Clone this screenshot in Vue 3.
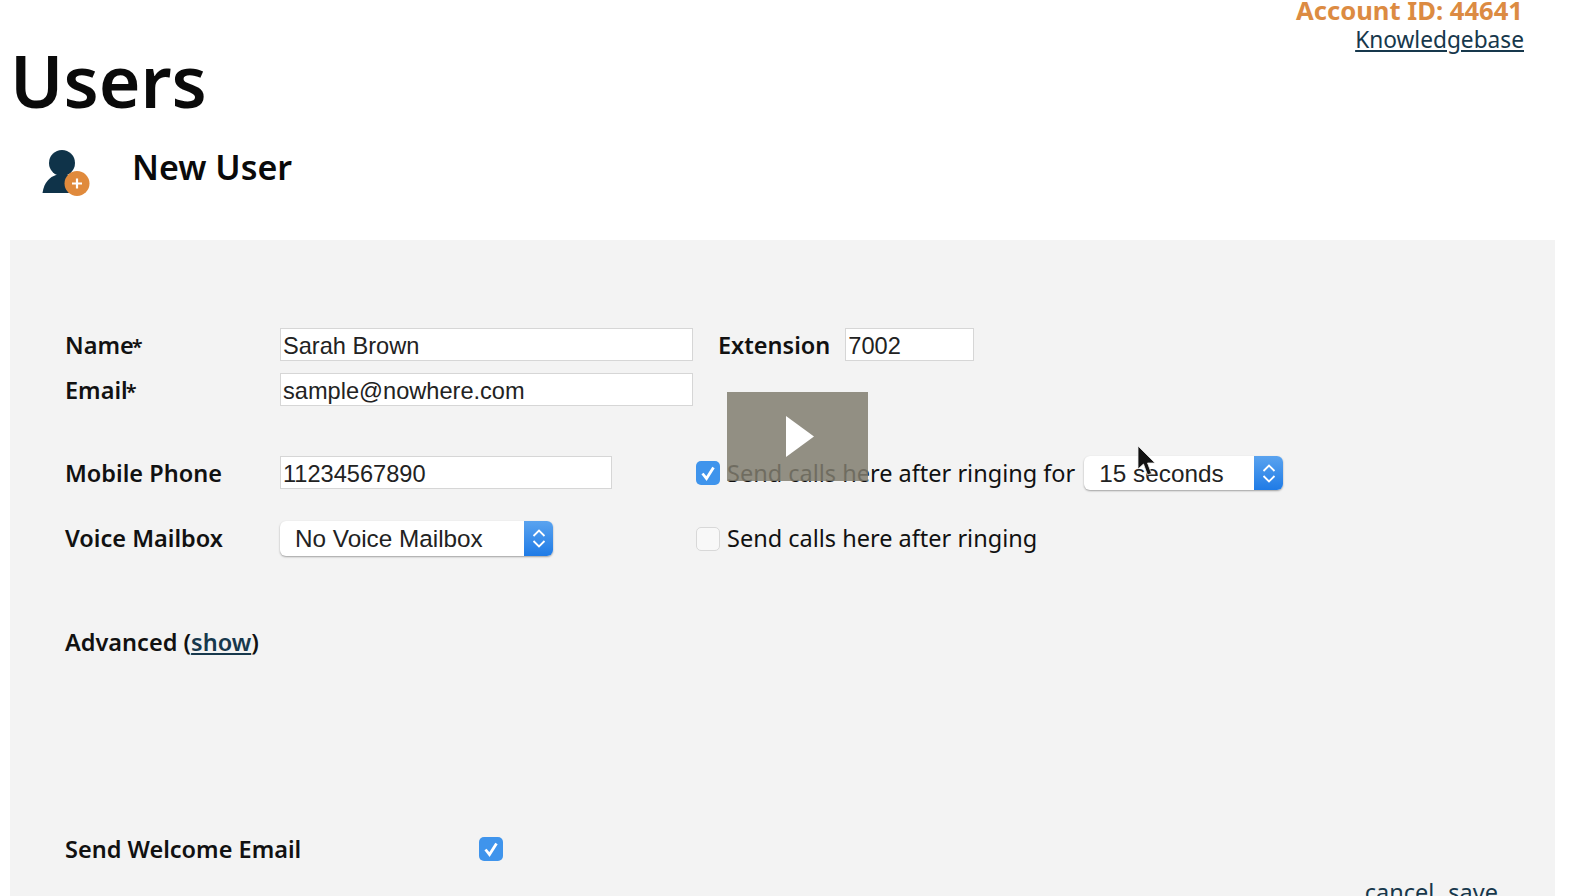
<script setup>
const chevrons = 'M2.5 8 L8 2.5 L13.5 8 M2.5 13 L8 18.5 L13.5 13'
</script>

<template>
  <div class="page">
    <header class="top">
      <div class="account">Account ID: 44641</div>
      <a class="kb">Knowledgebase</a>
      <h1 class="title">Users</h1>
      <div class="subhead">
        <svg class="user-icon" viewBox="0 0 48 48" width="48" height="48">
          <circle cx="20" cy="14" r="13" fill="#0f3349" />
          <path d="M0.5 44 C2 33 8 28 14 26 L27 26 C32 28 36 33 38 44 Z" fill="#0f3349" />
          <circle cx="35" cy="34.5" r="12.5" fill="#e08a3c" />
          <path d="M35 29.5 V39.5 M30 34.5 H40" stroke="#fff" stroke-width="2.2" />
        </svg>
        <h2 class="subtitle">New User</h2>
      </div>
    </header>

    <main class="panel">
      <div class="row name-row">
        <label class="lbl">Name<span class="star">*</span></label>
        <div class="field wide">Sarah Brown</div>
        <label class="lbl ext-lbl">Extension</label>
        <div class="field ext">7002</div>
      </div>
      <div class="row email-row">
        <label class="lbl">Email<span class="star">*</span></label>
        <div class="field wide">sample@nowhere.com</div>
      </div>
      <div class="row mobile-row">
        <label class="lbl">Mobile Phone</label>
        <div class="field mobile">11234567890</div>
        <span class="check on">
          <svg viewBox="0 0 24 24" width="24" height="24"><path d="M6.5 12.5 L10.5 17.5 L17.5 6.5" fill="none" stroke="#fff" stroke-width="2.8" /></svg>
        </span>
        <span class="opt">Send calls here after ringing for</span>
        <div class="select seconds">
          <span class="sel-text">15 seconds</span>
          <span class="sel-btn">
            <svg viewBox="0 0 16 21" width="16" height="21"><path :d="chevrons" fill="none" stroke="#fff" stroke-width="1.8" /></svg>
          </span>
        </div>
      </div>
      <div class="row voice-row">
        <label class="lbl">Voice Mailbox</label>
        <div class="select mailbox">
          <span class="sel-text">No Voice Mailbox</span>
          <span class="sel-btn">
            <svg viewBox="0 0 16 21" width="16" height="21"><path :d="chevrons" fill="none" stroke="#fff" stroke-width="1.8" /></svg>
          </span>
        </div>
        <span class="check off"></span>
        <span class="opt">Send calls here after ringing</span>
      </div>
      <div class="row advanced-row">
        <span class="lbl">Advanced (<a class="show">show</a>)</span>
      </div>
      <div class="row welcome-row">
        <label class="lbl welcome-lbl">Send Welcome Email</label>
        <span class="check on">
          <svg viewBox="0 0 24 24" width="24" height="24"><path d="M6.5 12.5 L10.5 17.5 L17.5 6.5" fill="none" stroke="#fff" stroke-width="2.8" /></svg>
        </span>
      </div>
      <div class="actions"><a>cancel</a><a>save</a></div>
    </main>

    <div class="play">
      <svg viewBox="0 0 28 41" width="28" height="41"><path d="M0 0 L28 20.5 L0 41 Z" fill="#fff" /></svg>
    </div>
    <svg class="cursor" viewBox="0 0 20 32" width="20" height="32">
      <path d="M1 1 L1 24 L6.5 19 L10.5 30 L14.5 28.5 L10.5 18 L18 18 Z" fill="#111" stroke="#eee" stroke-width="0.8" />
    </svg>
  </div>
</template>

<style scoped>
.page {
  position: relative;
  width: 1595px;
  height: 896px;
  overflow: hidden;
  background: #fff;
  font-family: "Noto Sans", "DejaVu Sans", sans-serif;
  color: #111;
}
.top {
  height: 240px;
  box-sizing: border-box;
  display: flex;
  flex-direction: column;
}
.account {
  align-self: flex-end;
  margin-right: 72px;
  height: 22px;
  line-height: 22px;
  font-size: 25.6px;
  font-weight: 700;
  color: #dc8b42;
}
.kb {
  align-self: flex-end;
  margin-right: 71px;
  height: 30px;
  margin-top: 3px;
  line-height: 30px;
  font-size: 22.7px;
  color: #17384c;
  text-decoration: underline;
}
.title {
  margin: -13px 0 0 10px;
  height: 78px;
  line-height: 78px;
  font-size: 71.5px;
  font-weight: 600;
  color: #0a0a0a;
}
.subhead {
  display: flex;
  align-items: center;
  margin: 29px 0 0 42px;
  height: 48px;
}
.user-icon { flex: none; }
.subtitle {
  margin: -12px 0 0 42px;
  font-size: 34px;
  font-weight: 600;
  line-height: 40px;
  color: #0a0a0a;
}
.panel {
  margin-left: 10px;
  width: 1545px;
  height: 656px;
  box-sizing: border-box;
  padding: 88px 0 0 55px;
  background: #f3f3f3;
  position: relative;
}
.row {
  display: flex;
  align-items: center;
  height: 33px;
}
.email-row { margin-top: 12px; }
.mobile-row { margin-top: 50px; }
.voice-row { margin-top: 32px; height: 35px; }
.voice-row .lbl,
.voice-row .opt { margin-bottom: 2px; }
.advanced-row { margin-top: 69px; }
.welcome-row { margin-top: 174px; }
.lbl {
  width: 215px;
  flex: none;
  font-size: 23.5px;
  font-weight: 600;
  white-space: nowrap;
}
.star { font-size: 20px; margin-left: -2px; }
.ext-lbl {
  width: auto;
  margin-left: 25px;
  margin-right: 15px;
}
.welcome-lbl { width: 414px; }
.field {
  box-sizing: border-box;
  height: 33px;
  line-height: 33px;
  padding: 1px 0 0 2px;
  border: 1px solid #d6d6d6;
  background: #fff;
  font-family: "Liberation Sans", Arial, sans-serif;
  font-size: 23.6px;
  color: #222;
  flex: none;
}
.wide { width: 413px; }
.ext { width: 129px; }
.mobile { width: 332px; margin-right: 84px; }
.check {
  box-sizing: border-box;
  flex: none;
  width: 24px;
  height: 24px;
  border-radius: 5px;
  display: block;
}
.check svg { display: block; }
.on { background: #3f94ec; }
.off {
  background: #f8f8f8;
  border: 1px solid #d8d8d8;
  margin-left: 143px;
}
.opt {
  margin-left: 7px;
  font-size: 23.5px;
  color: #111;
  white-space: nowrap;
}
.select {
  box-sizing: border-box;
  display: flex;
  align-items: stretch;
  background: #fff;
  border-radius: 6px;
  box-shadow: 0 1px 2px rgba(0, 0, 0, 0.35);
  overflow: hidden;
  font-family: "Liberation Sans", Arial, sans-serif;
  font-size: 24.3px;
  color: #222;
  flex: none;
}
.sel-text { flex: 1; padding-left: 15px; line-height: 35px; white-space: nowrap; }
.sel-btn {
  width: 29px;
  display: flex;
  align-items: center;
  justify-content: center;
  background: linear-gradient(#5aa3ef, #1f7be6);
}
.mailbox { width: 273px; height: 35px; }
.seconds { width: 199px; height: 34px; margin: 1px 0 0 9px; }
.show {
  color: #17384c;
  text-decoration: underline;
}
.actions {
  position: absolute;
  right: 57px;
  top: 636px;
  display: flex;
  gap: 14px;
  font-size: 23.5px;
  color: #17384c;
}
.play {
  position: absolute;
  left: 727px;
  top: 392px;
  width: 141px;
  height: 89px;
  background: rgba(128, 125, 111, 0.85);
  display: flex;
  align-items: center;
  justify-content: center;
}
.play svg { margin-left: 4px; }
.cursor {
  position: absolute;
  left: 1137px;
  top: 445px;
}
</style>
